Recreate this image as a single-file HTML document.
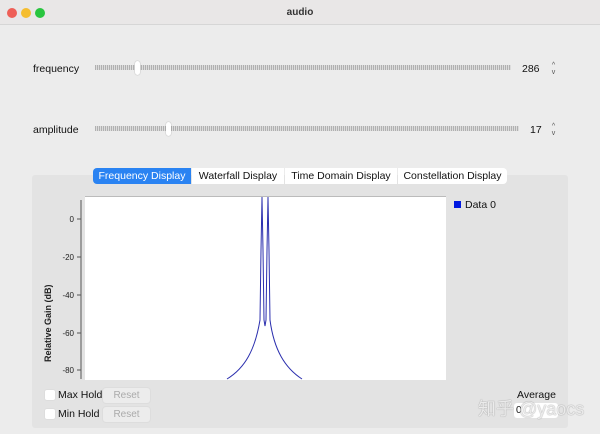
<!DOCTYPE html>
<html><head><style>
body{margin:0;width:600px;height:434px;overflow:hidden;background:#ececec;font-family:"Liberation Sans",sans-serif;font-size:10px;color:#111;position:relative}
.a{position:absolute}
.track{position:absolute;height:5px;background:repeating-linear-gradient(90deg,#b0b0b0 0 1px,#dcdcdc 1px 2px)}
.thumb{position:absolute;width:5px;height:14px;background:#fff;border-radius:3px;box-shadow:0 0 1px #888}
.spin{position:absolute;width:9px;height:14px;font-size:7px;line-height:7px;text-align:center;color:#555}
.tab{position:absolute;top:168px;height:16px;line-height:17px;text-align:center;background:#fff;font-size:10.5px}
.cb{position:absolute;width:10px;height:10px;background:#fff;border-radius:3px;border:1px solid #ddd}
.btn{position:absolute;width:47px;height:15px;background:#ececec;border:1px solid #ddd;border-radius:4px;color:#aaa;text-align:center;line-height:15px}
.l{position:absolute;font-size:10.5px}
</style></head><body>
<div class="a" style="left:0;top:0;width:600px;height:24px;background:#e9e7e7;border-bottom:1px solid #d6d6d6"></div>
<div class="a" style="left:7px;top:8px;width:10px;height:10px;border-radius:50%;background:#ee5f57"></div>
<div class="a" style="left:21px;top:8px;width:10px;height:10px;border-radius:50%;background:#f5bd2f"></div>
<div class="a" style="left:35px;top:8px;width:10px;height:10px;border-radius:50%;background:#29c53f"></div>
<div class="a" style="left:0;width:600px;top:7px;text-align:center;font-weight:bold;font-size:10px;color:#333">audio</div>

<div class="l" style="left:33px;top:63px">frequency</div>
<div class="track" style="left:95px;top:65px;width:416px"></div>
<div class="thumb" style="left:135px;top:61px"></div>
<div class="l" style="left:522px;top:63px">286</div>
<div class="spin" style="left:549px;top:62px">^<br>v</div>

<div class="l" style="left:33px;top:124px">amplitude</div>
<div class="track" style="left:95px;top:126px;width:424px"></div>
<div class="thumb" style="left:166px;top:122px"></div>
<div class="l" style="left:530px;top:124px">17</div>
<div class="spin" style="left:549px;top:123px">^<br>v</div>

<div class="a" style="left:32px;top:175px;width:536px;height:253px;background:#e3e3e3;border-radius:3px"></div>
<div class="tab" style="left:93px;width:98px;background:#2a83f2;color:#fff;border-radius:4px 0 0 4px">Frequency Display</div>
<div class="tab" style="left:192px;width:92px">Waterfall Display</div>
<div class="tab" style="left:285px;width:112px">Time Domain Display</div>
<div class="tab" style="left:398px;width:109px;border-radius:0 4px 4px 0">Constellation Display</div>

<div class="a" style="left:85px;top:196px;width:361px;height:183px;background:#fff;border-top:1px solid #bbb"></div>
<svg class="a" style="left:0;top:0" width="600" height="434">
<line x1="81" y1="200" x2="81" y2="379" stroke="#555" stroke-width="1"/>
<g stroke="#555"><line x1="77" y1="219" x2="81" y2="219"/><line x1="77" y1="257" x2="81" y2="257"/><line x1="77" y1="295" x2="81" y2="295"/><line x1="77" y1="333" x2="81" y2="333"/><line x1="77" y1="370" x2="81" y2="370"/></g>
<g font-size="8" fill="#222" text-anchor="end" font-family="Liberation Sans"><text x="74" y="222">0</text><text x="74" y="260">-20</text><text x="74" y="298">-40</text><text x="74" y="336">-60</text><text x="74" y="373">-80</text></g>
<text transform="translate(51,362) rotate(-90)" font-size="9" font-weight="bold" fill="#222" font-family="Liberation Sans">Relative Gain (dB)</text>
<path d="M227 379 C245 368 255 350 260 320 L261 250 L262 197 L263 250 L264 320 L265 326 L266 320 L267 250 L268 197 L269 250 L270 320 C274 350 285 368 302 379" fill="none" stroke="#2b2fae" stroke-width="1"/>
</svg>
<div class="a" style="left:454px;top:201px;width:7px;height:7px;background:#0018e0"></div>
<div class="l" style="left:465px;top:199px">Data 0</div>

<div class="cb" style="left:44px;top:389px"></div><div class="l" style="left:58px;top:389px">Max Hold</div>
<div class="btn" style="left:102px;top:387px">Reset</div>
<div class="cb" style="left:44px;top:408px"></div><div class="l" style="left:58px;top:408px">Min Hold</div>
<div class="btn" style="left:102px;top:406px">Reset</div>
<div class="l" style="left:517px;top:389px">Average</div>
<div class="a" style="left:514px;top:403px;width:42px;height:15px;background:#fff;border-radius:3px;padding-left:2px;line-height:15px">0</div>
<div class="a" style="left:478px;top:395px;font-size:18px;color:rgba(245,245,245,0.9);font-family:'Liberation Sans','Noto Sans CJK SC',sans-serif;text-shadow:0 0 1px #777">知乎 @yaocs</div>
</body></html>
